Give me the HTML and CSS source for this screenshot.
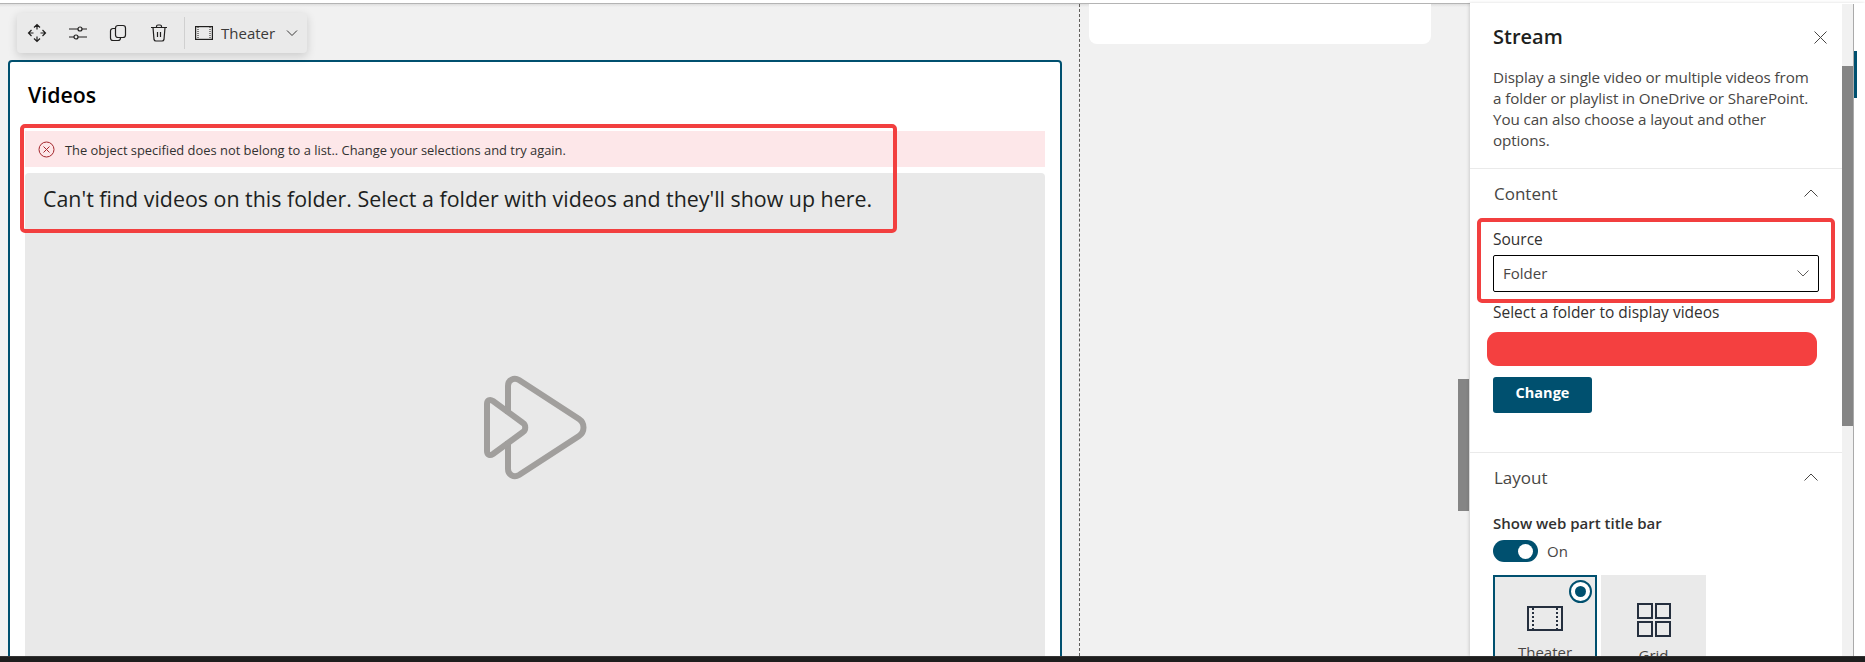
FILE: index.html
```html
<!DOCTYPE html>
<html lang="en">
<head>
<meta charset="utf-8">
<title>Stream web part</title>
<link rel="stylesheet" href="styles.css">
</head>
<body>
<div class="app">
  <div class="topstrip"></div>
  <div class="workspace">
    <div class="canvas">
      <section class="zone-left">
        <div class="toolbar">
          <button class="tool"><svg width="20" height="20" viewBox="0 0 20 20" fill="none" stroke="#201f1e" stroke-width="1.200"><path d="M7 4.500 10 1.500l3 3M7 15.500l3 3 3-3M4.500 7l-3 3 3 3M15.500 7l3 3-3 3M10 1.500v5M10 13.500v5M1.500 10h5M13.500 10h5"/></svg></button>
          <button class="tool"><svg width="20" height="20" viewBox="0 0 20 20" fill="none" stroke="#201f1e" stroke-width="1.200"><path d="M1 6h9M14 6h5M1 14h5M10 14h9"/><circle cx="12" cy="6" r="2"/><circle cx="8" cy="14" r="2"/></svg></button>
          <button class="tool"><svg width="20" height="20" viewBox="0 0 20 20" fill="none" stroke="#201f1e" stroke-width="1.200"><rect x="7.500" y="2.500" width="10" height="12" rx="2.500"/><path d="M7.500 5.500H5A2.500 2.500 0 0 0 2.500 8v7A2.500 2.500 0 0 0 5 17.500h5a2.500 2.500 0 0 0 2.500-2.500v-.5"/></svg></button>
          <button class="tool"><svg width="20" height="20" viewBox="0 0 20 20" fill="none" stroke="#201f1e" stroke-width="1.200"><path d="M2 4.500h16M7.500 4.500V3.500a1.500 1.500 0 0 1 1.500-1.500h2a1.500 1.500 0 0 1 1.500 1.500v1M4 4.500l1 12a2 2 0 0 0 2 1.500h6a2 2 0 0 0 2-1.500l1-12M8.500 9v5M11.500 9v5"/></svg></button>
          <span class="tool-sep"></span>
          <div class="layout-pick">
            <svg width="18" height="14" viewBox="0 0 18 14" fill="none" stroke="#201f1e" stroke-width="1.200"><rect x=".6" y=".6" width="16.800" height="12.800"/><path d="M3 1v12M15 1v12" stroke-dasharray="1 1" stroke-width="1.500" stroke="#605e5c"/></svg>
            <span>Theater</span>
            <svg class="chev-tool" width="12" height="8" viewBox="0 0 12 8" fill="none" stroke="#3b3a39"><path d="m1 1.500 5 5 5-5"/></svg>
          </div>
        </div>
        <article class="card">
          <h2 class="card-title">Videos</h2>
          <div class="error-bar">
            <svg width="17" height="17" viewBox="0 0 17 17" fill="none" stroke="#a4262c"><circle cx="8.500" cy="8.500" r="7.500"/><path d="m5.500 5.500 6 6M11.500 5.500l-6 6"/></svg>
            <span>The object specified does not belong to a list.. Change your selections and try again.</span>
          </div>
          <div class="video-empty">
            <p class="empty-msg">Can't find videos on this folder. Select a folder with videos and they'll show up here.</p>
            <svg class="play-art" width="110" height="108" viewBox="0 0 110 108" fill="none" stroke="#a19f9d" stroke-width="6" stroke-linejoin="round"><path d="M26 40V12c0-6 6-9 11-6l60 39c6 4 6 13 0 17l-60 39c-5 3-11 0-11-6V67"/><path d="M5 30c0-4 3-5 6-3l30 22c3 2 3 7 0 9L11 80c-3 2-6 1-6-3z"/></svg>
          </div>
          <div class="annot annot-main"></div>
        </article>
      </section>
      <section class="zone-right">
        <div class="mini-card"></div>
      </section>
      <div class="canvas-scroll"><div class="canvas-thumb"></div></div>
    </div>
    <aside class="panel">
      <div class="panel-body">
        <header class="panel-head">
          <h1>Stream</h1>
          <svg width="13" height="13" viewBox="0 0 13 13" fill="none" stroke="#484644"><path d="m.5.500 12 12M12.500.500l-12 12"/></svg>
        </header>
        <p class="panel-desc">Display a single video or multiple videos from a folder or playlist in OneDrive or SharePoint. You can also choose a layout and other options.</p>
        <section class="group group-content">
          <div class="group-head"><span>Content</span><svg width="14" height="8" viewBox="0 0 14 8" fill="none" stroke="#484644"><path d="m.5 7.500 6.500-6.500 6.500 6.500"/></svg></div>
          <div class="annot-source">
            <label class="field-label">Source</label>
            <div class="select"><span>Folder</span><svg width="12" height="7" viewBox="0 0 12 7" fill="none" stroke="#605e5c"><path d="m.5.500 5.500 5.500 5.500-5.500"/></svg></div>
          </div>
          <label class="field-label folder-label">Select a folder to display videos</label>
          <div class="redacted"></div>
          <button class="btn-primary">Change</button>
        </section>
        <section class="group group-layout">
          <div class="group-head"><span>Layout</span><svg width="14" height="8" viewBox="0 0 14 8" fill="none" stroke="#484644"><path d="m.5 7.500 6.500-6.500 6.500 6.500"/></svg></div>
          <label class="field-label title-bar-label">Show web part title bar</label>
          <div class="toggle-row"><span class="toggle"><span class="knob"></span></span><span class="toggle-text">On</span></div>
          <div class="tiles">
            <div class="tile tile-on">
              <span class="radio"><span class="radio-dot"></span></span>
              <svg width="36" height="25" viewBox="0 0 36 25" fill="none" stroke="#252f3e" stroke-width="2"><rect x="1" y="1" width="34" height="23"/><path d="M6 2v21M30 2v21" stroke-dasharray="2 2"/></svg>
              <span class="tile-label">Theater</span>
            </div>
            <div class="tile tile-grid">
              <svg width="34" height="34" viewBox="0 0 34 34" fill="none" stroke="#252f3e" stroke-width="2"><rect x="1" y="1" width="14" height="14"/><rect x="19" y="1" width="14" height="14"/><rect x="1" y="19" width="14" height="14"/><rect x="19" y="19" width="14" height="14"/></svg>
              <span class="tile-label">Grid</span>
            </div>
          </div>
        </section>
      </div>
      <div class="panel-scroll"><div class="panel-thumb"></div></div>
      <div class="rail"><div class="rail-mark"></div></div>
    </aside>
  </div>
  <div class="taskbar"></div>
</div>
</body>
</html>
```
FILE: styles.css
```css
* { box-sizing: border-box; }
html, body { margin: 0; height: 100%; overflow: hidden; }
body { font-family: "Open Sans", "Noto Sans", "Liberation Sans", sans-serif; color: #323130; background: #f1f1f1; }
h1, h2, p { margin: 0; }
button { font: inherit; border: 0; padding: 0; background: none; }

.app { display: flex; flex-direction: column; width: 1865px; height: 662px; overflow: hidden; }
.topstrip { height: 3px; flex: none; background: #fff; }
.workspace { flex: 1; min-height: 0; display: flex; position: relative; }
.taskbar { height: 6px; flex: none; background: #1e1e1e; border-top: 1px solid #333; }

.canvas { display: flex; width: 1470px; flex: none; background: linear-gradient(#dedede, #f1f1f1 3px); border-top: 1px solid #b4b4b4; overflow: hidden; }
.zone-left { width: 1080px; flex: none; border-right: 1px dashed #605e5c; padding: 9px 0 0 8px; }
.zone-right { width: 378px; flex: none; padding-left: 9px; }
.mini-card { width: 342px; height: 40px; background: #fff; border-radius: 0 0 8px 8px; }
.canvas-scroll { width: 11px; flex: none; padding-top: 375px; margin-left: 0; }
.canvas-thumb { height: 132px; background: #858585; }

.toolbar { display: flex; align-items: center; width: 290px; height: 40px; margin-left: 9px; background: #eaeaea; border-radius: 4px; box-shadow: 0 3px 10px rgba(0,0,0,.16); position: relative; z-index: 2; }
.tool { width: 40.500px; display: flex; justify-content: center; }
.tool-sep { width: 1px; height: 32px; background: #d0d0d0; margin: 0 10px 0 5px; }
.layout-pick { display: flex; align-items: center; font-size: 15px; color: #3b3a39; }
.layout-pick span { margin: 0 11px 0 8px; }

.card { position: relative; width: 1054px; height: 620px; margin-top: 7px; padding: 0 15px; background: #fff; border: 2px solid #00506f; border-radius: 4px 4px 0 0; }
.card-title { font-size: 21.300px; line-height: 28px; font-weight: 600; color: #000; margin: 19px 0 0 3px; height: 50px; }
.error-bar { display: flex; align-items: center; gap: 10px; height: 36px; padding-left: 13px; background: #fde7e9; font-size: 12.900px; color: #323130; }
.error-bar svg { flex: none; }
.error-bar span { position: relative; top: 1px; }
.video-empty { position: relative; height: 490px; margin-top: 6px; background: #e9e9e9; border-radius: 4px 4px 0 0; padding: 12px 18px; }
.empty-msg { font-size: 21.400px; line-height: 28px; color: #201f1e; white-space: nowrap; }
.play-art { position: absolute; left: 457px; top: 201px; }
.annot { position: absolute; border: 4px solid #f23f3f; border-radius: 5px; pointer-events: none; }
.annot-main { left: 10px; top: 62px; width: 877px; height: 109px; }

.panel { display: flex; flex: 1; background: #fff; box-shadow: -1px 0 3px rgba(0,0,0,.15); position: relative; border-top: 1px solid #fff; }
.panel-body { width: 372px; flex: none; overflow: hidden; }
.panel-head { display: flex; justify-content: space-between; align-items: center; padding: 16px 15px 0 23px; height: 48px; }
.panel-head svg { margin-top: 2px; }
.panel-head h1 { font-size: 20px; font-weight: 600; color: #201f1e; }
.panel-desc { padding: 15px 28px 0 23px; font-size: 15.200px; line-height: 21px; color: #484644; height: 116px; letter-spacing: -.1px; }
.group { border-top: 1px solid #eaeaea; padding: 0 23px; }
.group-head { display: flex; justify-content: space-between; align-items: center; height: 48px; font-size: 17px; color: #484644; padding: 0 1px 0 1px; }
.group-content { height: 284px; }
.annot-source { margin: 1px -16px 0; padding: 7px 12px 0; height: 85px; border: 4px solid #f23f3f; border-radius: 5px; }
.field-label { display: block; font-size: 15.500px; line-height: 20px; font-weight: 500; color: #323130; }
.select { display: flex; align-items: center; justify-content: space-between; height: 37px; margin-top: 6px; padding: 0 9px 2px 9px; border: 1.500px solid #000; border-radius: 2px; font-size: 15px; color: #484644; }
.select svg { margin-top: 2px; }
.folder-label { margin-top: -1px; }
.redacted { width: 330px; height: 34px; margin: 10px 0 11px -6px; background: #f44040; border-radius: 11px; }
.btn-primary { display: block; width: 99px; height: 36px; padding-bottom: 5px; background: #00506f; color: #fff; font-size: 14.500px; font-weight: 700; border-radius: 3px; }
.title-bar-label { margin-top: 12px; font-size: 15px; font-weight: 600; }
.toggle-row { display: flex; align-items: center; gap: 9px; margin-top: 7px; }
.toggle { display: flex; justify-content: flex-end; align-items: center; width: 45px; height: 22px; padding-right: 5px; background: #00506f; border-radius: 11px; }
.knob { width: 15px; height: 15px; background: #fff; border-radius: 50%; }
.toggle-text { font-size: 15px; color: #484644; }
.tiles { display: flex; gap: 4px; margin-top: 13px; }
.tile { position: relative; display: flex; flex-direction: column; align-items: center; width: 105px; height: 100px; padding-top: 28px; background: #eaeaea; }
.tile-on { width: 104px; border: 2px solid #00506f; padding-top: 29px; }
.tile-label { font-size: 15px; color: #484644; margin-top: 10px; line-height: 22px; }
.tile-grid .tile-label { margin-top: 7px; }
.radio { position: absolute; right: 3px; top: 3px; display: flex; align-items: center; justify-content: center; width: 23px; height: 23px; background: #fff; border: 2px solid #00506f; border-radius: 50%; }
.radio-dot { width: 11px; height: 11px; background: #00506f; border-radius: 50%; }

.panel-scroll { width: 11px; flex: none; background: #f1f1f1; padding-top: 62px; }
.panel-thumb { height: 360px; background: #858585; }
.rail { flex: 1; border-left: 1px solid #aaa; background: #fff; padding-top: 47px; }
.rail-mark { width: 3px; height: 47px; background: #00506f; }
```
